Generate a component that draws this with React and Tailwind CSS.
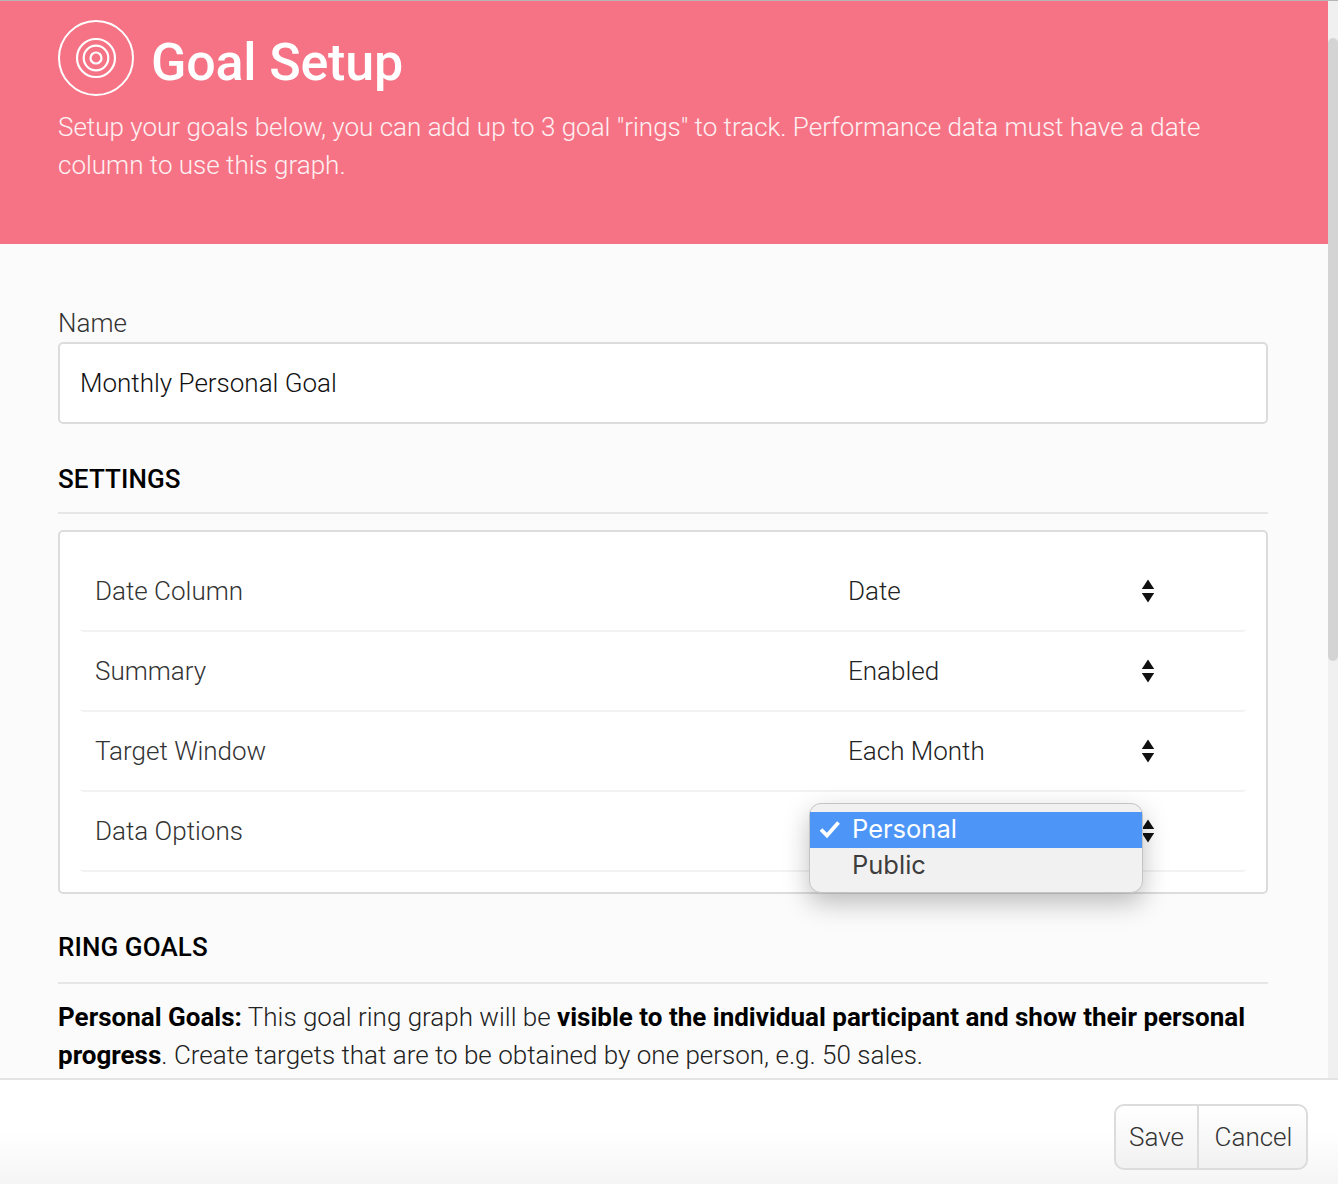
const settings = [
  { label: 'Date Column', value: 'Date' },
  { label: 'Summary', value: 'Enabled' },
  { label: 'Target Window', value: 'Each Month' },
  { label: 'Data Options', value: '' },
];

const Stepper = () => (
  <svg width="14" height="24" viewBox="0 0 14 24" className="fill-[#111]">
    <path d="M7 0.5 L13.2 10 L0.8 10 Z" />
    <path d="M7 23.5 L13.2 14 L0.8 14 Z" />
  </svg>
);

const TargetIcon = () => (
  <div className="w-[76px] h-[76px] shrink-0 rounded-full border-2 border-white flex items-center justify-center">
    <svg width="42" height="42" viewBox="0 0 42 42" fill="none" stroke="white" strokeWidth="2.2" className="-mt-px">
      <circle cx="21" cy="21" r="19" />
      <circle cx="21" cy="21" r="12.3" />
      <circle cx="21" cy="21" r="5.5" />
    </svg>
  </div>
);

const SectionTitle = ({ children, className }) => (
  <div className={`border-b-2 border-[#e6e6e6] text-[26px] leading-[30px] font-medium tracking-[0.1px] text-black ${className}`}>
    {children}
  </div>
);

export default function App() {
  return (
    <div className="w-[1338px] h-[1184px] flex flex-col overflow-hidden bg-[#fbfbfb] font-['Roboto',sans-serif] font-light">
      <div className="h-px bg-[#b5b5b5] shrink-0" />
      <div className="flex-1 flex min-h-0">
        <main className="w-[1328px] overflow-hidden">
          <header className="h-[243px] bg-[#f57385] pl-[58px] pr-[120px] pt-[19px] text-white">
            <div className="flex items-start gap-[17px]">
              <TargetIcon />
              <h1 className="text-[52px] leading-[76px] font-medium mt-[5px] tracking-[-0.2px]">Goal Setup</h1>
            </div>
            <p className="text-[26px] leading-[38px] mt-[7px] text-white/90">
              Setup your goals below, you can add up to 3 goal "rings" to track. Performance data must have a date column to use this graph.
            </p>
          </header>

          <div className="px-[58px] pr-[60px] pt-[60px]">
            <label className="block text-[26px] leading-[38px] text-[#333]">Name</label>
            <div className="h-[82px] bg-white border-2 border-[#dcdcdc] rounded-[5px] flex items-center px-[20px] text-[26px] text-[#111]">
              Monthly Personal Goal
            </div>

            <SectionTitle className="mt-[40px] h-[50px]">SETTINGS</SectionTitle>

            <div className="relative mt-[16px] h-[364px] bg-white border-2 border-[#dcdcdc] rounded-[5px] px-[20px] pt-[20px]">
              {settings.map((row) => (
                <div key={row.label} className="h-[80px] flex items-center border-b-2 border-[#f2f2f2] rounded-b-[4px] pl-[15px] text-[26px] text-[#333]">
                  <span className="w-[753px]">{row.label}</span>
                  <span className="w-[293px] text-[#222]">{row.value}</span>
                  <Stepper />
                </div>
              ))}

              {/* native select popup */}
              <div className="absolute left-[749px] top-[271px] w-[334px] h-[90px] pt-[8px] rounded-[12px] border border-[#c4c4c4] bg-[#f1f1f1] shadow-[0_10px_26px_rgba(0,0,0,0.25)] font-['Inter',sans-serif] font-normal text-[25.5px] leading-[36px]">
                <div className="h-[36px] pb-[2px] bg-[#4d96f7] text-white flex items-center">
                  <svg width="22" height="18" viewBox="0 0 22 18" fill="none" stroke="white" strokeWidth="3.8" className="ml-[9px] mr-[11px]">
                    <path d="M2 9.5 L8 15.5 L19.5 2.5" />
                  </svg>
                  Personal
                </div>
                <div className="h-[36px] pb-[2px] pl-[42px] text-[#3d3d3d] flex items-center">Public</div>
              </div>
            </div>

            <SectionTitle className="mt-[38px] h-[52px]">RING GOALS</SectionTitle>

            <p className="mt-[14px] text-[26px] leading-[38px] text-[#222]">
              <strong className="font-bold text-black">Personal Goals:</strong> This goal ring graph will be <strong className="font-bold text-black">visible to the individual participant and show their personal progress</strong>. Create targets that are to be obtained by one person, e.g. 50 sales.
            </p>
          </div>
        </main>

        <div className="w-[10px] bg-[#f0f0f0] pt-[37px]">
          <div className="h-[623px] bg-[#d4d4d4] rounded-[5px]" />
        </div>
      </div>

      <footer className="h-[106px] shrink-0 border-t-2 border-[#e4e4e4] bg-gradient-to-b from-white via-white to-[#f5f5f5] flex justify-end items-start pt-[24px] pr-[30px]">
        <div className="flex h-[66px] border-2 border-[#dcdcdc] rounded-[10px] bg-gradient-to-b from-white to-[#f1f1f1] text-[26px] text-[#333]">
          <button className="w-[83px] border-r-2 border-[#dcdcdc] font-light">Save</button>
          <button className="w-[107px] pl-[2px] font-light">Cancel</button>
        </div>
      </footer>
    </div>
  );
}
